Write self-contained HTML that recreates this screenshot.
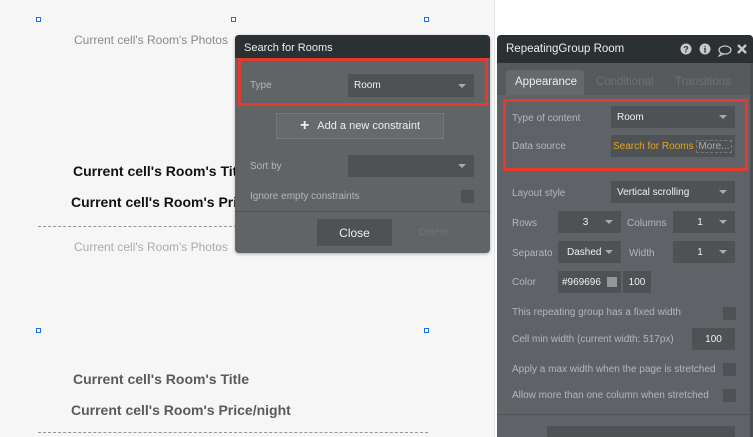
<!DOCTYPE html>
<html style="width:753px;height:437px;overflow:hidden"><head><meta charset="utf-8"><style>
*{box-sizing:border-box;margin:0;padding:0}
body{width:753px;height:437px;overflow:hidden;background:#fff;font-family:"Liberation Sans",sans-serif;position:relative}
.a{position:absolute}
.h{position:absolute;width:5px;height:5px;border:1px solid #1a6bff;background:#fff}
.t{position:absolute;font-size:12px;color:#8a8a8a;white-space:nowrap}
.b{position:absolute;font-size:14px;font-weight:bold;white-space:nowrap}
.dash{position:absolute;border-top:1px dashed #969696;height:0}
.p{font-family:"Liberation Sans",sans-serif;}
.lbl{position:absolute;font-size:10px;color:#b4b7b9;white-space:nowrap;font-family:"Liberation Sans",sans-serif}
.dd{position:absolute;background:#4e5255;color:#f0f0f0;font-size:10px;font-family:"Liberation Sans",sans-serif;padding-left:6px;display:flex;align-items:center;white-space:nowrap}
.dd.c{justify-content:center;padding-left:0}
.ar{position:absolute;right:8px;top:50%;margin-top:-2px;border-left:4px solid transparent;border-right:4px solid transparent;border-top:4px solid #a9acae}
.cb{position:absolute;width:14px;height:14px;background:#4e5255}
.red{position:absolute;border:3px solid #e53a2c}
</style></head><body>
<div class="a" style="left:0;top:0;width:495px;height:437px;background:#f6f6f6;border-right:1px solid #e2e2e2"></div>
<div class="h" style="left:36px;top:17px"></div><div class="h" style="left:231px;top:17px"></div><div class="h" style="left:424px;top:17px"></div>
<div class="h" style="left:36px;top:328px"></div><div class="h" style="left:424px;top:328px"></div>
<div class="t" style="left:74px;top:33px">Current cell's Room's Photos</div>
<div class="b" style="left:73px;top:163px;color:#111">Current cell's Room's Title</div>
<div class="b" style="left:71px;top:194px;color:#111">Current cell's Room's Price/night</div>
<div class="dash" style="left:38px;top:226px;width:390px"></div>
<div class="t" style="left:74px;top:240px;color:#ababab">Current cell's Room's Photos</div>
<div class="b" style="left:73px;top:371px;color:#5a5a5a">Current cell's Room's Title</div>
<div class="b" style="left:71px;top:402px;color:#5a5a5a">Current cell's Room's Price/night</div>
<div class="dash" style="left:38px;top:432px;width:390px"></div>

<div class="a" style="left:235px;top:35px;width:255px;height:218px;background:#606467;border-radius:4px;overflow:hidden;box-shadow:0 1px 3px rgba(0,0,0,.3)">
 <div class="a" style="left:0;top:0;width:255px;height:23px;background:#2b3033"></div>
 <div class="a p" style="left:9px;top:7px;font-size:11px;color:#eee">Search for Rooms</div>
 <div class="a" style="left:0;top:176px;width:255px;height:1px;background:#4c5053"></div>
</div>
<div class="red" style="left:238px;top:58px;width:250px;height:48px"></div>
<div class="lbl" style="left:250px;top:80px">Type</div>
<div class="dd" style="left:348px;top:74px;width:126px;height:23px">Room<span class="ar"></span></div>
<div class="a p" style="left:276px;top:113px;width:168px;height:26px;background:#666a6d;border:1px solid #74787b;color:#eee;font-size:11px;display:flex;align-items:center;justify-content:center"><span style="font-size:16px;margin-right:8px;font-weight:bold">+</span>Add a new constraint</div>
<div class="lbl" style="left:250px;top:161px">Sort by</div>
<div class="dd" style="left:348px;top:155px;width:126px;height:22px"><span class="ar"></span></div>
<div class="lbl" style="left:250px;top:191px">Ignore empty constraints</div>
<div class="cb" style="left:461px;top:190px;width:13px;height:13px"></div>
<div class="a p" style="left:317px;top:219px;width:75px;height:27px;background:#4e5255;color:#eee;font-size:12px;display:flex;align-items:center;justify-content:center">Close</div>
<div class="a p" style="left:419px;top:227px;font-size:10px;color:#6f7376">Delete</div>

<div class="a" style="left:497px;top:35px;width:256px;height:402px;background:#5f6367;border-radius:4px 4px 0 0;overflow:hidden">
 <div class="a" style="left:0;top:0;width:256px;height:28px;background:#2b3033"></div>
 <div class="a p" style="left:9px;top:8px;font-size:11.5px;color:#eee">RepeatingGroup Room</div>
 <div class="a" style="left:0;top:28px;width:256px;height:32px;background:#565a5d"></div>
 <div class="a" style="left:9px;top:35px;width:78px;height:25px;background:#65696c;border-radius:3px 3px 0 0"></div>
 <div class="a p" style="left:18px;top:41px;font-size:11.5px;color:#eee">Appearance</div>
 <div class="a p" style="left:99px;top:41px;font-size:11.5px;color:#6d7174">Conditional</div>
 <div class="a p" style="left:178px;top:41px;font-size:11.5px;color:#6d7174">Transitions</div>
 <div class="a" style="left:253px;top:28px;width:3px;height:374px;background:#4a4e51"></div>
 <div class="a" style="left:0;top:379px;width:253px;height:1px;background:#505457"></div>
 <div class="a" style="left:50px;top:391px;width:188px;height:11px;background:#4e5255"></div>
</div>
<svg class="a" style="left:680px;top:43px" width="70" height="14" viewBox="0 0 70 14">
 <circle cx="6" cy="6" r="5.5" fill="#c8c8c8"/><text x="6" y="9.5" font-size="9" font-weight="bold" text-anchor="middle" fill="#2b3033" font-family="Liberation Sans">?</text>
 <circle cx="25" cy="6" r="5.5" fill="#c8c8c8"/><text x="25" y="9.5" font-size="9" font-weight="bold" text-anchor="middle" fill="#2b3033" font-family="Liberation Serif">i</text>
 <ellipse cx="45" cy="7" rx="6" ry="4" fill="none" stroke="#c8c8c8" stroke-width="1.2"/><path d="M41 10 L39 13 L44 11" fill="none" stroke="#c8c8c8" stroke-width="1.1"/>
 <path d="M58 2 L66 10 M66 2 L58 10" stroke="#c8c8c8" stroke-width="2.4"/>
</svg>
<div class="red" style="left:503px;top:99px;width:245px;height:72px"></div>
<div class="lbl" style="left:512px;top:113px">Type of content</div>
<div class="dd" style="left:611px;top:106px;width:124px;height:22px">Room<span class="ar"></span></div>
<div class="lbl" style="left:512px;top:141px">Data source</div>
<div class="dd" style="left:611px;top:135px;width:124px;height:22px;padding-left:2px"><span style="color:#e8a317">Search for Rooms</span>&nbsp;<span style="color:#aaa;border:1px dashed #777;padding:0 1px">More...</span></div>
<div class="lbl" style="left:512px;top:188px">Layout style</div>
<div class="dd" style="left:611px;top:181px;width:124px;height:22px">Vertical scrolling<span class="ar"></span></div>
<div class="lbl" style="left:512px;top:218px">Rows</div>
<div class="dd c" style="left:558px;top:211px;width:63px;height:22px"><span style="margin-right:8px">3</span><span class="ar"></span></div>
<div class="lbl" style="left:627px;top:218px">Columns</div>
<div class="dd c" style="left:673px;top:211px;width:62px;height:22px"><span style="margin-right:8px">1</span><span class="ar"></span></div>
<div class="lbl" style="left:512px;top:248px">Separato</div>
<div class="dd" style="left:558px;top:241px;width:63px;height:22px;padding-left:9px">Dashed<span class="ar"></span></div>
<div class="lbl" style="left:629px;top:248px">Width</div>
<div class="dd c" style="left:673px;top:241px;width:62px;height:22px"><span style="margin-right:8px">1</span><span class="ar"></span></div>
<div class="lbl" style="left:512px;top:277px">Color</div>
<div class="dd" style="left:558px;top:271px;width:63px;height:22px;padding-left:4px">#969696<span class="a" style="left:49px;top:6px;width:10px;height:10px;background:#969696"></span></div>
<div class="dd c" style="left:623px;top:271px;width:28px;height:22px">100</div>
<div class="lbl" style="left:512px;top:307px">This repeating group has a fixed width</div>
<div class="cb" style="left:723px;top:307px;width:13px;height:13px"></div>
<div class="lbl" style="left:512px;top:334px">Cell min width (current width: 517px)</div>
<div class="dd c" style="left:692px;top:328px;width:43px;height:22px">100</div>
<div class="lbl" style="left:512px;top:364px">Apply a max width when the page is stretched</div>
<div class="cb" style="left:723px;top:363px;width:13px;height:13px"></div>
<div class="lbl" style="left:512px;top:390px">Allow more than one column when stretched</div>
<div class="cb" style="left:723px;top:389px;width:13px;height:13px"></div>
</body></html>
